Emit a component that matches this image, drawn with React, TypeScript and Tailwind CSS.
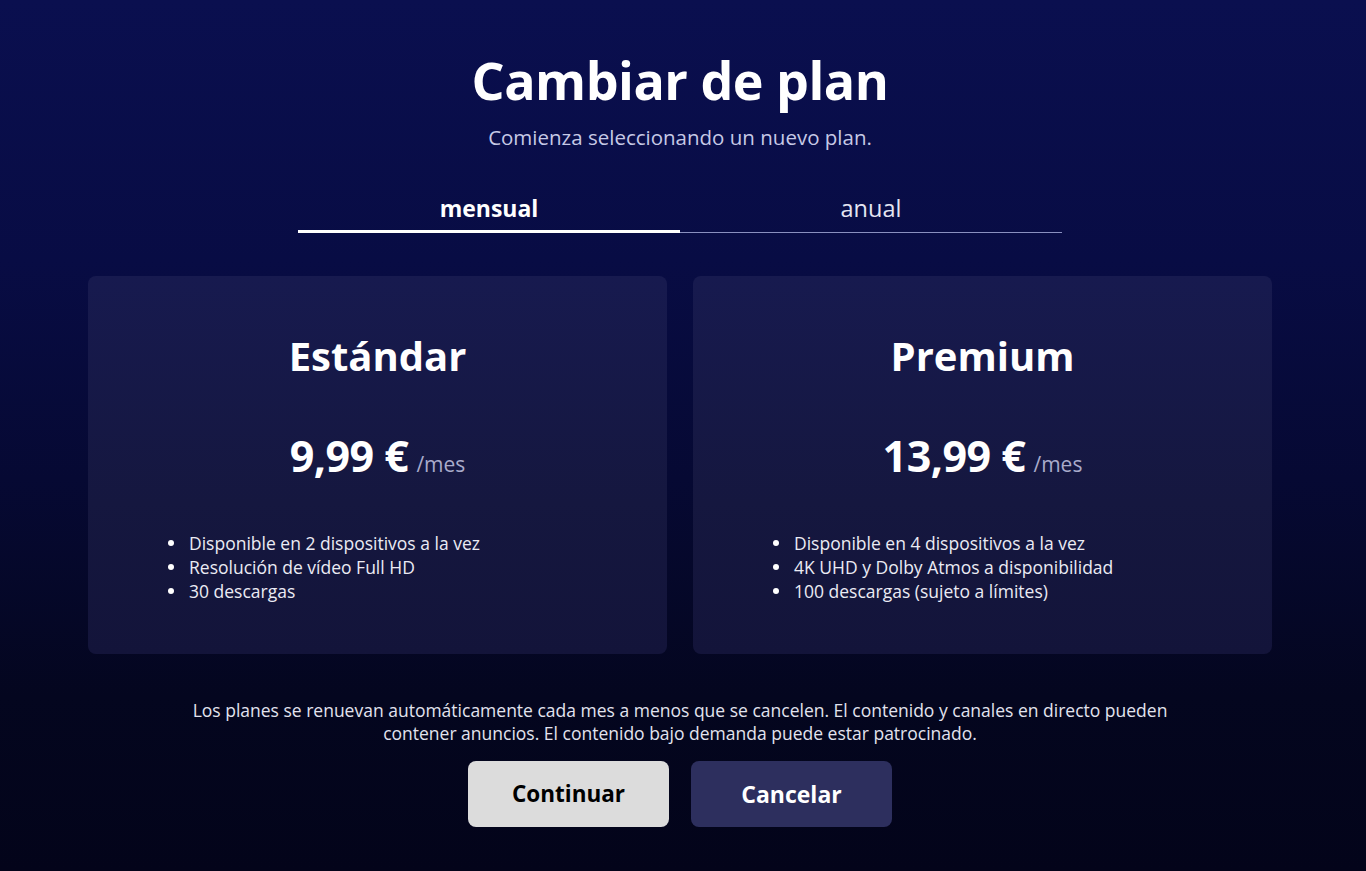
import React, { useState } from "react";

const plans = [
  {
    name: "Estándar",
    price: "9,99 €",
    features: [
      "Disponible en 2 dispositivos a la vez",
      "Resolución de vídeo Full HD",
      "30 descargas",
    ],
  },
  {
    name: "Premium",
    price: "13,99 €",
    features: [
      "Disponible en 4 dispositivos a la vez",
      "4K UHD y Dolby Atmos a disponibilidad",
      "100 descargas (sujeto a límites)",
    ],
  },
];

const App = () => {
  const [tab, setTab] = useState<"mensual" | "anual">("mensual");

  return (
    <main
      className="min-h-screen w-full flex flex-col items-center pt-[50px] pr-[6px] text-white bg-[linear-gradient(180deg,#0a0f4f_0%,#080c44_30%,#060933_55%,#04061f_80%,#03041a_100%)]"
      style={{ fontFamily: "'Open Sans', 'Liberation Sans', sans-serif" }}
    >
      {/* Heading */}
      <h1 className="text-[52px] leading-[60px] font-bold tracking-[-0.5px]">
        Cambiar de plan
      </h1>
      <p className="mt-[14px] text-[20.5px] leading-[26px] text-[#c6c9e6]">
        Comienza seleccionando un nuevo plan.
      </p>

      {/* Tabs */}
      <div className="mt-[40px] w-[764px] flex items-end">
        <button
          onClick={() => setTab("mensual")}
          className={
            tab === "mensual"
              ? "flex-1 text-[23px] leading-[36px] font-bold pb-[4px] border-b-[3px] border-white"
              : "flex-1 text-[23.5px] leading-[36px] text-[#e4e5f2] pb-[6px] border-b border-[#8a90c0]"
          }
        >
          mensual
        </button>
        <button
          onClick={() => setTab("anual")}
          className={
            tab === "anual"
              ? "flex-1 text-[23px] leading-[36px] font-bold pb-[4px] border-b-[3px] border-white"
              : "flex-1 text-[23.5px] leading-[36px] text-[#e4e5f2] pb-[6px] border-b border-[#8a90c0]"
          }
        >
          anual
        </button>
      </div>

      {/* Plan cards */}
      <div className="mt-[43px] w-[1184px] grid grid-cols-2 gap-[26px]">
        {plans.map((plan) => (
          <div
            key={plan.name}
            className="h-[378px] rounded-[8px] flex flex-col items-center pt-[56px] bg-[linear-gradient(180deg,#171a4f_0%,#15173f_60%,#13143a_100%)]"
          >
            <h2 className="text-[40px] leading-[48px] font-bold">{plan.name}</h2>
            <div className="mt-[52px] flex items-baseline gap-[8px]">
              <span className="text-[43px] leading-[48px] font-bold tracking-[-0.5px]">
                {plan.price}
              </span>
              <span className="text-[21px] text-[#a9abcb]">/mes</span>
            </div>
            <ul className="mt-[50px] self-stretch pl-[80px] text-[17.5px] leading-[24px] text-[#ebebf4]">
              {plan.features.map((f) => (
                <li key={f} className="flex items-center gap-[15px]">
                  <span className="w-[6px] h-[6px] rounded-full bg-white shrink-0" />
                  {f}
                </li>
              ))}
            </ul>
          </div>
        ))}
      </div>

      {/* Footnote */}
      <p className="mt-[45px] w-[1010px] text-center text-[17.5px] leading-[23px] text-[#e2e3ee]">
        Los planes se renuevan automáticamente cada mes a menos que se cancelen.
        El contenido y canales en directo pueden contener anuncios. El contenido
        bajo demanda puede estar patrocinado.
      </p>

      {/* Actions */}
      <div className="mt-[16px] flex gap-[22px]">
        <button className="w-[201px] h-[66px] rounded-[8px] bg-[#dcdcdc] text-black text-[22.5px] font-bold">
          Continuar
        </button>
        <button className="w-[201px] h-[66px] rounded-[8px] bg-[#2d2f5e] text-white text-[23px] font-bold">
          Cancelar
        </button>
      </div>
    </main>
  );
};

export default App;
